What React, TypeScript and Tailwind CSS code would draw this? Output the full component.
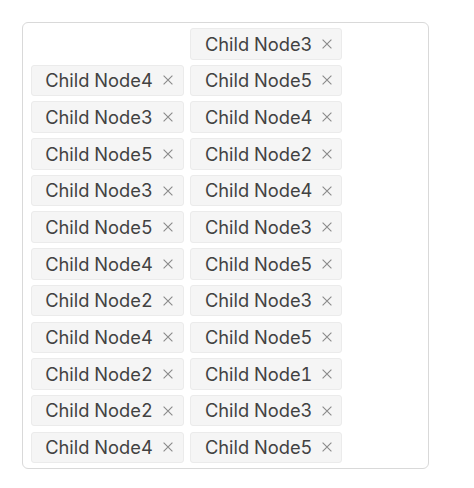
import React from "react";

const rows: [string | null, string][] = [
  [null, "Child Node3"],
  ["Child Node4", "Child Node5"],
  ["Child Node3", "Child Node4"],
  ["Child Node5", "Child Node2"],
  ["Child Node3", "Child Node4"],
  ["Child Node5", "Child Node3"],
  ["Child Node4", "Child Node5"],
  ["Child Node2", "Child Node3"],
  ["Child Node4", "Child Node5"],
  ["Child Node2", "Child Node1"],
  ["Child Node2", "Child Node3"],
  ["Child Node4", "Child Node5"],
];

function Tag({ label }: { label: string }) {
  return (
    <div className="flex h-[31.5px] items-center justify-between rounded-[3px] border border-[#ebebeb] bg-[#f5f5f5] pl-[13.5px] pr-[9.5px]">
      <span className="text-[18.3px] leading-none text-[#424242]" style={{ fontFamily: "Inter, 'Liberation Sans', sans-serif", fontFeatureSettings: "'tnum'" }}>
        {label}
      </span>
      <svg width="10" height="10" viewBox="0 0 10 10" className="shrink-0">
        <path d="M0.6 0.6 L9.4 9.4 M9.4 0.6 L0.6 9.4" stroke="#8a8a8a" strokeWidth="1.1" fill="none" />
      </svg>
    </div>
  );
}

export default function App() {
  return (
    <div className="min-h-[488px] w-[474px] bg-white pl-[22px] pt-[22px]">
      <div className="w-[407px] rounded-[6px] border border-[#d9d9d9] pb-[4.5px] pl-[7.7px] pt-[5px]">
        <div className="grid grid-cols-[153px_152px] gap-x-[6.7px] gap-y-[5.2px]">
          {rows.map(([a, b], i) => (
            <React.Fragment key={i}>
              {a ? <Tag label={a} /> : <div />}
              <Tag label={b} />
            </React.Fragment>
          ))}
        </div>
      </div>
    </div>
  );
}
